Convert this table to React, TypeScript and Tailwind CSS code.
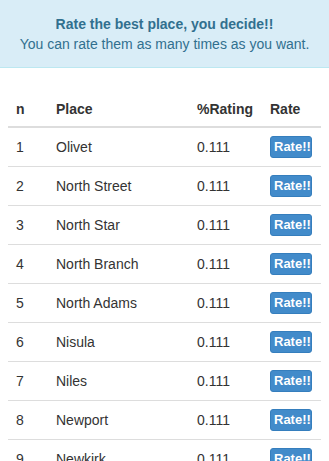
const places = [
  "Olivet",
  "North Street",
  "North Star",
  "North Branch",
  "North Adams",
  "Nisula",
  "Niles",
  "Newport",
  "Newkirk",
];

export default function App() {
  return (
    <div className="min-h-screen bg-white text-[14px] leading-[20px] text-[#333] font-['Liberation_Sans',Arial,sans-serif]">
      <div className="bg-[#d9edf7] border-b border-[#bce8f1] pt-[14px] pb-[13px] text-center text-[#31708f]">
        <div className="font-bold">Rate the best place, you decide!!</div>
        <div>You can rate them as many times as you want.</div>
      </div>

      <div className="px-2 mt-[23px]">
        <table className="w-full border-collapse text-left">
          <thead>
            <tr>
              <th className="w-[40px] px-2 pt-2 pb-[7px] border-b-2 border-[#ddd] font-bold align-bottom">n</th>
              <th className="w-[141px] px-2 pt-2 pb-[7px] border-b-2 border-[#ddd] font-bold align-bottom">Place</th>
              <th className="w-[73px] px-2 pt-2 pb-[7px] border-b-2 border-[#ddd] font-bold align-bottom">%Rating</th>
              <th className="px-2 pt-2 pb-[7px] border-b-2 border-[#ddd] font-bold align-bottom">Rate</th>
            </tr>
          </thead>
          <tbody>
            {places.map((place, i) => (
              <tr key={place} className="border-t border-[#ddd]">
                <td className="p-2 align-top leading-[22px]">{i + 1}</td>
                <td className="p-2 align-top leading-[22px]">{place}</td>
                <td className="p-2 align-top leading-[22px]">0.111</td>
                <td className="p-2 align-top">
                  <button className="block w-[42px] h-[22px] overflow-hidden whitespace-nowrap text-left pl-[3px] bg-[#428bca] border border-[#357ebd] rounded-[3px] text-white text-[13px] font-bold leading-[20px]">
                    Rate!!
                  </button>
                </td>
              </tr>
            ))}
          </tbody>
        </table>
      </div>
    </div>
  );
}
